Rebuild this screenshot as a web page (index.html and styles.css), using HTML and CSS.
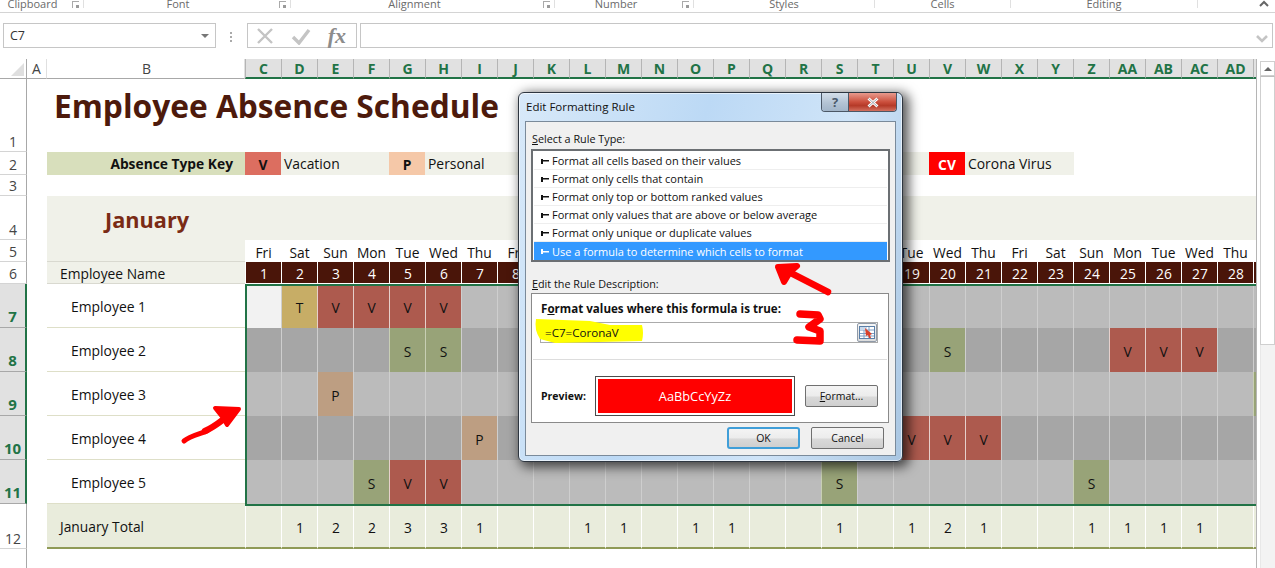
FILE: index.html
```html
<!DOCTYPE html>
<html lang="en">
<head>
<meta charset="utf-8">
<title>Employee Absence Schedule</title>
<link rel="stylesheet" href="styles.css">
</head>
<body>
<div class="app">
  <div class="ribbon">
    <div class="grp g1"><span>Clipboard</span><b class="launch"></b></div>
    <div class="grp g2"><span>Font</span><b class="launch"></b></div>
    <div class="grp g3"><span>Alignment</span><b class="launch"></b></div>
    <div class="grp g4"><span>Number</span><b class="launch"></b></div>
    <div class="grp g5"><span>Styles</span></div>
    <div class="grp g6"><span>Cells</span></div>
    <div class="grp g7"><span>Editing</span></div>
    <svg class="collapse" width="12" height="8" viewBox="0 0 12 8"><path d="M2 6l4-4 4 4" fill="none" stroke="#666" stroke-width="2"/></svg>
  </div>
  <div class="fbar">
    <div class="namebox"><span>C7</span><i class="tri"></i></div>
    <div class="dots"></div>
    <div class="fbtns">
      <svg width="18" height="18" viewBox="0 0 18 18"><path d="M2 2l14 14M16 2L2 16" stroke="#c4c4c4" stroke-width="2.4" fill="none"/></svg>
      <svg width="20" height="18" viewBox="0 0 20 18"><path d="M2 10l6 6L18 3" stroke="#c4c4c4" stroke-width="3.4" fill="none"/></svg>
      <span class="fx">fx</span>
    </div>
    <div class="finput"><svg width="12" height="8" viewBox="0 0 12 8"><path d="M1 1l5 5 5-5" fill="none" stroke="#c4c4c4" stroke-width="2.6"/></svg></div>
  </div>
  <div class="work">
    <div class="sheet">
      <div class="row hd">
        <div class="rh corner"><i></i></div><div class="ch a">A</div><div class="ch b">B</div>
        <div class="ch on">C</div><div class="ch on">D</div><div class="ch on">E</div><div class="ch on">F</div><div class="ch on">G</div><div class="ch on">H</div><div class="ch on">I</div><div class="ch on">J</div><div class="ch on">K</div><div class="ch on">L</div><div class="ch on">M</div><div class="ch on">N</div><div class="ch on">O</div><div class="ch on">P</div><div class="ch on">Q</div><div class="ch on">R</div><div class="ch on">S</div><div class="ch on">T</div><div class="ch on">U</div><div class="ch on">V</div><div class="ch on">W</div><div class="ch on">X</div><div class="ch on">Y</div><div class="ch on">Z</div><div class="ch on">AA</div><div class="ch on">AB</div><div class="ch on">AC</div><div class="ch on">AD</div><div class="ch on tail"></div>
      </div>
      <div class="row r1"><div class="rh">1</div><div class="a"></div><div class="title">Employee Absence Schedule</div></div>
      <div class="row r2">
        <div class="rh">2</div><div class="a"></div>
        <div class="b keyhead">Absence Type Key</div>
        <div class="c kv">V</div><div class="ktext w108">Vacation</div>
        <div class="c kp">P</div><div class="ktext w504">Personal</div>
        <div class="c kcv">CV</div><div class="ktext w109">Corona Virus</div>
      </div>
      <div class="row r3"><div class="rh">3</div></div>
      <div class="row r4"><div class="rh">4</div><div class="a"></div><div class="month">January</div></div>
      <div class="row r5">
        <div class="rh">5</div><div class="a"></div><div class="b band"></div>
        <div class="c">Fri</div><div class="c">Sat</div><div class="c">Sun</div><div class="c">Mon</div><div class="c">Tue</div><div class="c">Wed</div><div class="c">Thu</div><div class="c">Fri</div><div class="c"></div><div class="c"></div><div class="c"></div><div class="c"></div><div class="c"></div><div class="c"></div><div class="c"></div><div class="c"></div><div class="c"></div><div class="c"></div><div class="c">Tue</div><div class="c">Wed</div><div class="c">Thu</div><div class="c">Fri</div><div class="c">Sat</div><div class="c">Sun</div><div class="c">Mon</div><div class="c">Tue</div><div class="c">Wed</div><div class="c">Thu</div>
      </div>
      <div class="row r6">
        <div class="rh">6</div><div class="a"></div><div class="b band name-h">Employee Name</div>
        <div class="c d">1</div><div class="c d">2</div><div class="c d">3</div><div class="c d">4</div><div class="c d">5</div><div class="c d">6</div><div class="c d">7</div><div class="c d">8</div><div class="c d"></div><div class="c d"></div><div class="c d"></div><div class="c d"></div><div class="c d"></div><div class="c d"></div><div class="c d"></div><div class="c d"></div><div class="c d"></div><div class="c d"></div><div class="c d">19</div><div class="c d">20</div><div class="c d">21</div><div class="c d">22</div><div class="c d">23</div><div class="c d">24</div><div class="c d">25</div><div class="c d">26</div><div class="c d">27</div><div class="c d">28</div><div class="c d tail"></div>
      </div>
      <div class="row emp lt">
        <div class="rh on">7</div><div class="a"></div><div class="b ename">Employee 1</div>
        <div class="c blank"></div><div class="c T">T</div><div class="c V">V</div><div class="c V">V</div><div class="c V">V</div><div class="c V">V</div><div class="c"></div><div class="c"></div><div class="c"></div><div class="c"></div><div class="c"></div><div class="c"></div><div class="c"></div><div class="c"></div><div class="c"></div><div class="c"></div><div class="c"></div><div class="c"></div><div class="c"></div><div class="c"></div><div class="c"></div><div class="c"></div><div class="c"></div><div class="c"></div><div class="c"></div><div class="c"></div><div class="c"></div><div class="c"></div><div class="c tail"></div>
      </div>
      <div class="row emp dk">
        <div class="rh on">8</div><div class="a"></div><div class="b ename">Employee 2</div>
        <div class="c"></div><div class="c"></div><div class="c"></div><div class="c"></div><div class="c S">S</div><div class="c S">S</div><div class="c"></div><div class="c"></div><div class="c"></div><div class="c"></div><div class="c"></div><div class="c"></div><div class="c"></div><div class="c"></div><div class="c"></div><div class="c"></div><div class="c"></div><div class="c"></div><div class="c"></div><div class="c S">S</div><div class="c"></div><div class="c"></div><div class="c"></div><div class="c"></div><div class="c V">V</div><div class="c V">V</div><div class="c V">V</div><div class="c"></div><div class="c tail"></div>
      </div>
      <div class="row emp lt">
        <div class="rh on">9</div><div class="a"></div><div class="b ename">Employee 3</div>
        <div class="c"></div><div class="c"></div><div class="c P">P</div><div class="c"></div><div class="c"></div><div class="c"></div><div class="c"></div><div class="c"></div><div class="c"></div><div class="c"></div><div class="c"></div><div class="c"></div><div class="c"></div><div class="c"></div><div class="c"></div><div class="c"></div><div class="c"></div><div class="c"></div><div class="c"></div><div class="c"></div><div class="c"></div><div class="c"></div><div class="c"></div><div class="c"></div><div class="c"></div><div class="c"></div><div class="c"></div><div class="c"></div><div class="c tail S"></div>
      </div>
      <div class="row emp dk">
        <div class="rh on">10</div><div class="a"></div><div class="b ename">Employee 4</div>
        <div class="c"></div><div class="c"></div><div class="c"></div><div class="c"></div><div class="c"></div><div class="c"></div><div class="c P">P</div><div class="c"></div><div class="c"></div><div class="c"></div><div class="c"></div><div class="c"></div><div class="c"></div><div class="c"></div><div class="c"></div><div class="c"></div><div class="c"></div><div class="c"></div><div class="c V">V</div><div class="c V">V</div><div class="c V">V</div><div class="c"></div><div class="c"></div><div class="c"></div><div class="c"></div><div class="c"></div><div class="c"></div><div class="c"></div><div class="c tail"></div>
      </div>
      <div class="row emp lt">
        <div class="rh on">11</div><div class="a"></div><div class="b ename">Employee 5</div>
        <div class="c"></div><div class="c"></div><div class="c"></div><div class="c S">S</div><div class="c V">V</div><div class="c V">V</div><div class="c"></div><div class="c"></div><div class="c"></div><div class="c"></div><div class="c"></div><div class="c"></div><div class="c"></div><div class="c"></div><div class="c"></div><div class="c"></div><div class="c S">S</div><div class="c"></div><div class="c"></div><div class="c"></div><div class="c"></div><div class="c"></div><div class="c"></div><div class="c S">S</div><div class="c"></div><div class="c"></div><div class="c"></div><div class="c"></div><div class="c tail"></div>
      </div>
      <div class="row total">
        <div class="rh">12</div><div class="a"></div><div class="b tname">January Total</div>
        <div class="c"></div><div class="c">1</div><div class="c">2</div><div class="c">2</div><div class="c">3</div><div class="c">3</div><div class="c">1</div><div class="c"></div><div class="c"></div><div class="c">1</div><div class="c">1</div><div class="c"></div><div class="c">1</div><div class="c">1</div><div class="c"></div><div class="c"></div><div class="c">1</div><div class="c"></div><div class="c">1</div><div class="c">2</div><div class="c">1</div><div class="c"></div><div class="c"></div><div class="c">1</div><div class="c">1</div><div class="c">1</div><div class="c">1</div><div class="c"></div><div class="c tail"></div>
      </div>
      <div class="row rest"><div class="rh"></div></div>
      <div class="selection"></div>
    </div>
    <div class="vscroll">
      <div class="sbtn"><i class="up"></i></div>
      <div class="thumb"></div>
      <div class="track"></div>
    </div>
  </div>

  <div class="dialog">
    <div class="dtitle">
      <span>Edit Formatting Rule</span>
      <div class="caps">
        <div class="cap help">?</div>
        <div class="cap close"><svg width="14" height="11" viewBox="0 0 14 11"><path d="M2.5 1.5l9 8M11.5 1.5l-9 8" stroke="#fff" stroke-width="3"/><path d="M2.5 1.5l9 8M11.5 1.5l-9 8" stroke="#56606c" stroke-width="1" opacity=".55"/></svg></div>
      </div>
    </div>
    <div class="dbody">
      <div class="dlabel"><u>S</u>elect a Rule Type:</div>
      <div class="rules">
        <div class="rule"><i class="mark"></i>Format all cells based on their values</div>
        <div class="rule"><i class="mark"></i>Format only cells that contain</div>
        <div class="rule"><i class="mark"></i>Format only top or bottom ranked values</div>
        <div class="rule"><i class="mark"></i>Format only values that are above or below average</div>
        <div class="rule"><i class="mark"></i>Format only unique or duplicate values</div>
        <div class="rule sel"><i class="mark"></i>Use a formula to determine which cells to format</div>
      </div>
      <div class="dlabel second"><u>E</u>dit the Rule Description:</div>
      <div class="desc">
        <div class="desc-h">F<u>o</u>rmat values where this formula is true:</div>
        <div class="formula">
          <svg class="hilite" width="110" height="26" viewBox="0 0 110 26"><path d="M2 1L56 3L76 7L108 7Q110 15 108 23L21 25L6 21Q0 12 2 1z" fill="#ffff00"/></svg>
          <span class="ftext">=C7=CoronaV</span>
          <div class="refbtn"><svg width="16" height="15" viewBox="0 0 16 15"><rect x=".5" y="1.500" width="15" height="12" fill="#fff" stroke="#5b7fa8"/><path d="M1 5h14M1 8.500h14M1 11h14M5 2v11M10 2v11" stroke="#7f9fc4"/><rect x="1" y="2" width="7" height="3" fill="#c9d9ec"/><path d="M6 3l7 6-2 1 1 3-2 0-1-3-2 1z" fill="#d8402a"/></svg></div>
        </div>
        <div class="divider"></div>
        <div class="preview-row">
          <span class="pv-label">Preview:</span>
          <div class="pv-box"><div class="pv-fill">AaBbCcYyZz</div></div>
          <div class="btn fmt"><u>F</u>ormat...</div>
        </div>
      </div>
      <div class="actions">
        <div class="btn ok">OK</div>
        <div class="btn">Cancel</div>
      </div>
    </div>
  </div>

  <svg class="ink" width="1275" height="568" viewBox="0 0 1275 568">
    <g fill="none" stroke="#ff0000" stroke-linecap="round" stroke-linejoin="round">
      <path stroke-width="6.500" d="M828 292L787 271"/>
      <path stroke-width="6" fill="#ff0000" d="M797 266L778 267L784 282L790 272z"/>
      <path stroke-width="7.500" d="M800 314L818 315L820 319L809 327L820 331L820 341L797 340"/>
      <path stroke-width="5" d="M184 441C190 436 200 434 207 431"/>
      <path stroke-width="6.500" d="M205 431C215 427 222 420 232 413"/>
      <path stroke-width="4" fill="#ff0000" d="M215 408L239 409L227 425L223 418z"/>
    </g>
  </svg>
</div>
</body>
</html>
```
FILE: styles.css
```css
* { box-sizing: border-box; }
html, body { margin: 0; padding: 0; }
body { background: #fff; font-family: "Open Sans", "Noto Sans", sans-serif; color: #111; overflow: hidden; }
.app { position: relative; width: 1275px; height: 568px; overflow: hidden; }

/* ribbon */
.ribbon { display: flex; height: 13px; border-bottom: 1px solid #d4d4d4; position: relative; overflow: hidden; }
.grp { position: relative; display: flex; justify-content: center; border-right: 1px solid #e0e0e0; height: 8px; font-size: 11px; line-height: 8px; color: #6a6a6a; overflow: visible; }
.g1 { width: 84px; padding-right: 18px; }
.g2 { width: 207px; padding-right: 18px; }
.g3 { width: 264px; padding-right: 16px; }
.g4 { width: 139px; padding-right: 16px; }
.g5 { width: 181px; }
.g6 { width: 136px; }
.g7 { width: 187px; }
.launch { position: absolute; right: 4px; top: 1px; width: 7px; height: 7px; border-left: 1px solid #aaa; border-top: 1px solid #aaa; }
.launch::after { content: ""; position: absolute; right: 0; bottom: 0; width: 3px; height: 3px; background: #9a9a9a; }
.collapse { position: absolute; left: 1258px; top: 0; }

/* formula bar */
.fbar { display: flex; align-items: stretch; height: 46px; padding: 10px 2px 11px 3px; background: #fff; }
.namebox { position: relative; width: 213px; border: 1px solid #c6c6c6; padding-left: 6px; font-size: 12.500px; line-height: 23px; color: #333; }
.tri { position: absolute; right: 6px; top: 10px; border: 4px solid transparent; border-top: 4px solid #777; border-bottom: 0; width: 0; height: 0; }
.dots { width: 4px; margin: 9px 13px 6px 14px; height: 10px; background: radial-gradient(circle at 1px 1px, #aaa 1px, transparent 1.2px) 0 0 / 2px 4px repeat-y; }
.fbtns { width: 110px; border: 1px solid #c6c6c6; display: flex; align-items: center; justify-content: space-between; padding: 0 10px 0 8px; }
.fx { font-family: "Liberation Serif", serif; font-style: italic; font-weight: bold; font-size: 22px; line-height: 22px; color: #8c8c8c; }
.finput { flex: 1; margin-left: 3px; border: 1px solid #c6c6c6; display: flex; justify-content: flex-end; align-items: center; padding: 6px 4px 0 0; }

/* sheet */
.work { display: flex; height: 509px; }
.sheet { position: relative; width: 1257px; border-right: 1px solid #b5b5b5; overflow: hidden; }
.row { display: flex; position: relative; }
.rh { width: 27px; flex: none; border-right: 1px solid #a8a8a8; border-bottom: 1px solid #d4d4d4; display: flex; align-items: flex-end; justify-content: center; font-size: 14px; line-height: 18px; color: #444; }
.a { width: 20px; flex: none; }
.b { width: 198px; flex: none; }
.c { width: 36px; flex: none; display: flex; align-items: center; justify-content: center; font-size: 13.800px; }
.tail { width: 3px; }

.hd { height: 20px; background: #fff; }
.corner { border-bottom: 1px solid #a8a8a8; position: relative; }
.corner i { position: absolute; right: 2px; bottom: 2px; width: 0; height: 0; border-left: 13px solid transparent; border-bottom: 13px solid #dfdfdf; }
.ch { display: flex; align-items: center; justify-content: center; font-size: 14px; color: #444; border-right: 1px solid #e0e0e0; border-bottom: 1px solid #a8a8a8; }
.ch.a { width: 20px; }
.ch.b { width: 198px; padding-left: 2px; }
.ch.on { width: 36px; flex: none; background: #e1e1e1; color: #217346; font-weight: 700; border-right: 0; border-left: 1px solid #b5b5b5; border-bottom: 2px solid #217346; }
.ch.tail { width: 3px; }

.r1 { height: 73px; }
.title { padding: 6px 0 0 7px; font-size: 31.700px; line-height: 42px; font-weight: 700; color: #4d1a0c; white-space: nowrap; }
.r2 { height: 23px; }
.r2 .c { padding-top: 1px; }
.keyhead { background: #d8dfbc; text-align: right; padding-right: 12px; font-weight: 700; font-size: 13.800px; line-height: 24px; color: #111; }
.kv { background: #dc6e60; font-weight: 700; }
.kp { background: #f5c8a8; font-weight: 700; }
.kcv { background: #ff0000; color: #fff; font-weight: 700; }
.ktext { background: #f0f1e9; font-size: 13.900px; line-height: 24px; padding-left: 3px; }
.w108 { width: 108px; }
.w504 { width: 504px; }
.w109 { width: 109px; }
.r3 { height: 21px; }
.r4 { height: 44px; }
.month { flex: 1; background: #f0f1e9; padding: 9px 0 0 58px; font-size: 21.700px; line-height: 30px; font-weight: 700; color: #7a2b15; }
.r5 { height: 22px; }
.band { background: #f0f1e9; border-bottom: 1px solid #d9d9d0; }
.r5 .c { padding: 3px 0 0 1px; }
.r6 { height: 22px; }
.name-h { font-size: 13.800px; line-height: 23px; padding-left: 13px; }
.d { background: #4a1509; color: #fff; border-left: 1px solid #fff; height: 21px; padding: 2px 0 0 1px; }

.emp { height: 44px; }
.ename { font-size: 13.900px; padding-left: 24px; line-height: 46px; border-bottom: 1px solid #dedfc8; }
.emp .c { border-left: 1px solid #cecece; padding-top: 2px; }
.emp.lt .c { background: #bbbbbb; }
.emp.dk .c { background: #a6a6a6; }
.emp .c.V { background: #ad5a4e; border-left-color: #e6d0cc; }
.emp .c.S { background: #98a378; border-left-color: #c8cfb4; }
.emp .c.P { background: #bd9e82; }
.emp .c.T { background: #c7ad66; }
.emp .c.blank { background: #f2f2f2; }
.rh.on { background: #e1e1e1; border-right: 2px solid #217346; border-bottom: 1px solid #a8a8a8; color: #217346; font-weight: 700; font-size: 15px; padding-bottom: 2px; }

.total { height: 45px; }
.total .b, .total .c { background: #e9ecdc; border-bottom: 2px solid #8f9a56; }
.total .c { border-left: 1px solid #fff; padding: 3px 0 0 1px; }
.tname { font-size: 13.800px; line-height: 46px; padding-left: 13px; }
.rest { height: 20px; }
.rest .rh { border-bottom: 0; }

.selection { position: absolute; left: 245px; top: 225px; width: 1012px; height: 222px; border: 2px solid #217346; border-right: 0; pointer-events: none; }

/* scrollbar */
.vscroll { width: 18px; padding: 2px 0 0 3px; display: flex; flex-direction: column; background: #fff; }
.sbtn { height: 15px; border: 1px solid #cfcfcf; display: flex; justify-content: center; align-items: center; background: #fff; }
.up { width: 0; height: 0; border: 4px solid transparent; border-top: 0; border-bottom: 4px solid #666; }
.thumb { height: 269px; border: 1px solid #cfcfcf; border-top: 1px solid #bdbdbd; background: #fff; }
.track { flex: 1; background: #f3f3f3; border-left: 1px solid #e8e8e8; }

/* dialog */
.dialog { position: absolute; left: 518px; top: 92px; width: 385px; height: 370px; padding: 0 6px 6px; border: 1px solid #2e3640; border-radius: 6px; background: linear-gradient(105deg, #d8e9f9 0%, #bcd9f5 40%, #cfe4f8 70%, #a9c6e2 100%); box-shadow: 4px 3px 12px 2px rgba(0,0,0,.65), inset 0 0 0 1px rgba(255,255,255,.6); font-size: 10.500px; color: #111; }
.dtitle { display: flex; justify-content: space-between; height: 28px; padding-left: 1px; font-size: 11.500px; line-height: 27px; }
.caps { display: flex; height: 19px; margin-right: -1px; border: 1px solid #4b5766; border-top: 0; border-radius: 0 0 4px 4px; overflow: hidden; }
.cap { display: flex; align-items: center; justify-content: center; }
.help { width: 27px; background: linear-gradient(#d4dfea, #b3c3d4 55%, #a2b5c9); color: #4a5a6c; font-weight: 700; font-size: 13px; border-right: 1px solid #4b5766; }
.close { width: 47px; background: linear-gradient(#e89a8d, #cb4f3c 50%, #b53a28 70%, #d2705f); }
.dbody { height: 335px; background: #f0f0f0; border: 1px solid #7a8a9a; padding: 10px 6px 0; }
.dlabel { font-size: 10.800px; line-height: 14px; height: 14px; }
.second { margin-top: 15px; }
.rules { margin: 3px 0 0 -1px; width: 359px; height: 113px; border: 2px solid #6b6f73; background: #fff; padding: 1px 1px 0; }
.rule { display: flex; align-items: center; height: 18px; padding: 1px 0 0 7px; border-bottom: 1px solid #eeeeee; font-size: 11px; line-height: 16px; }
.rule.sel { background: #3399ff; color: #fff; border-bottom: 0; }
.mark { width: 8px; height: 5px; margin-right: 3px; background: linear-gradient(#111, #111) 0 50% / 8px 1.5px no-repeat, linear-gradient(#111, #111) 0 0 / 2px 5px no-repeat; }
.sel .mark { background: linear-gradient(#fff, #fff) 0 50% / 8px 1.5px no-repeat, linear-gradient(#fff, #fff) 0 0 / 2px 5px no-repeat; }
.desc { margin: 2px 0 0 -1px; width: 358px; height: 130px; background: #fff; border: 1px solid #8a8a8a; padding: 8px 0 0; position: relative; }
.desc-h { font-weight: 700; font-size: 11.600px; line-height: 14px; padding-left: 9px; }
.formula { position: relative; margin: 6px 10px 0 8px; height: 21px; border: 1px solid #ababab; display: flex; justify-content: space-between; align-items: center; }
.hilite { position: absolute; left: -7px; top: -5px; }
.ftext { position: relative; padding-left: 4px; font-size: 11.600px; }
.refbtn { position: relative; width: 20px; height: 19px; border: 1px solid #8f9aa8; border-radius: 2px; background: linear-gradient(#f6f6f6, #dcdcdc); display: flex; align-items: center; justify-content: center; }
.divider { margin: 16px 1px 0; height: 1px; background: #dddddd; }
.preview-row { display: flex; align-items: center; margin-top: 16px; padding-left: 9px; }
.pv-label { width: 54px; font-weight: 700; font-size: 10.500px; }
.pv-box { width: 200px; height: 40px; border: 1px solid #4c4c4c; padding: 2px; background: #fff; }
.pv-fill { height: 100%; background: #ff0000; color: #fff; font-size: 12.800px; display: flex; align-items: center; justify-content: center; }
.btn { width: 73px; height: 22px; border: 1px solid #707070; border-radius: 2px; background: linear-gradient(#f4f4f4 0%, #ececec 50%, #d9d9d9 55%, #cfcfcf 100%); font-size: 10.500px; display: flex; align-items: center; justify-content: center; }
.fmt { margin-left: 10px; }
.actions { display: flex; justify-content: flex-end; gap: 11px; padding-right: 5px; margin-top: 4px; }
.ok { border: 2px solid #3f9ed8; border-radius: 3px; }

/* hand-drawn annotation layer */
.ink { position: absolute; left: 0; top: 0; pointer-events: none; }
```
